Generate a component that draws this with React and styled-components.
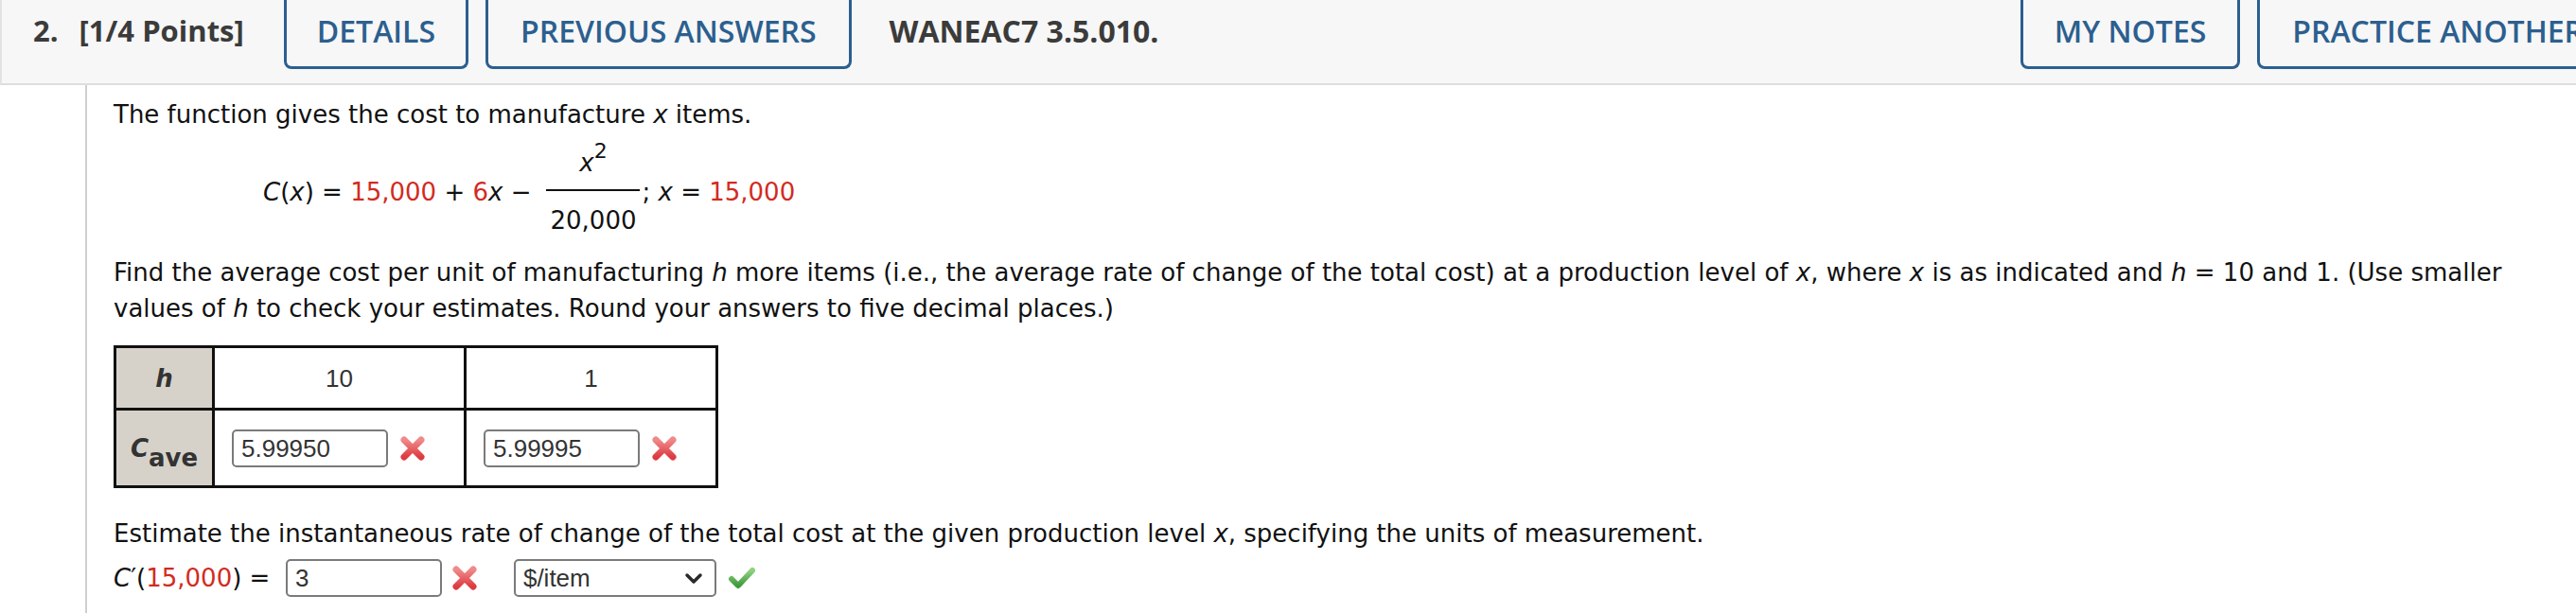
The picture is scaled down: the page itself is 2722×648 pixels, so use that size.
import React from "react";
import styled, { createGlobalStyle } from "styled-components";

const GlobalStyle = createGlobalStyle`
  html, body {
    margin: 0;
    padding: 0;
    background: #fff;
  }
  body {
    width: 2722px;
    height: 648px;
    overflow: hidden;
  }
`;

const Page = styled.div`
  width: 2722px;
  height: 648px;
  overflow: hidden;
  font-family: "DejaVu Sans", Verdana, sans-serif;
  color: #111;
`;

const Header = styled.div`
  display: flex;
  align-items: flex-start;
  height: 88px;
  padding-left: 33px;
  background: #f7f7f7;
  border-left: 2px solid #e2e2e2;
  border-bottom: 2px solid #dedede;
  font-family: "Open Sans", sans-serif;
  font-size: 32px;
  font-weight: 600;
  overflow: hidden;
`;

const HeadText = styled.div`
  height: 64px;
  display: flex;
  align-items: center;
  color: #3b3b3b;
  font-size: ${(p) => p.size || 31}px;
  font-weight: 700;
  margin-left: ${(p) => p.gap || 0}px;
  white-space: nowrap;
`;

const TabButton = styled.div`
  flex-shrink: 0;
  height: 73px;
  box-sizing: border-box;
  display: flex;
  align-items: center;
  padding: 0 ${(p) => p.pad || 32}px;
  padding-bottom: 6px;
  margin-left: ${(p) => p.gap || 0}px;
  border: 3px solid #2c5f8f;
  border-top: none;
  border-radius: 0 0 8px 8px;
  color: #2c5f8f;
  white-space: nowrap;
`;

const RightGroup = styled.div`
  display: flex;
  flex-shrink: 0;
  margin-left: auto;
  margin-right: -45px;
`;

const Body = styled.div`
  margin-left: 90px;
  border-left: 2px solid #cfcfcf;
  padding-left: 28px;
  height: 558px;
  font-size: 26px;
  line-height: 38px;
`;

const Para = styled.p`
  margin: 0;
  padding-top: ${(p) => p.top || 0}px;
`;

const Red = styled.span`
  color: #d22b1f;
`;

const Formula = styled.div`
  display: flex;
  align-items: center;
  margin-left: 158px;
  margin-top: 11px;
  height: 104px;
  white-space: pre;
`;

const Frac = styled.span`
  display: inline-flex;
  flex-direction: column;
  align-items: stretch;
  margin: 0 2px 0 16px;
`;

const Num = styled.span`
  padding: 0 4px 8px;
  border-bottom: 2px solid #111;
  line-height: 40px;
  text-align: center;
`;

const Sup = styled.sup`
  font-size: 22px;
  vertical-align: 14px;
  line-height: 0;
`;

const Den = styled.span`
  padding: 9px 4px 0;
  line-height: 44px;
  text-align: center;
`;

const Table = styled.table`
  border-collapse: collapse;
  margin-top: 20px;
  font-family: "Liberation Sans", Arial, sans-serif;
  font-size: 26px;
  color: #333;
`;

const HeadCell = styled.th`
  width: 101px;
  height: ${(p) => p.h}px;
  padding: 0;
  background: #d6d2ca;
  border: 3px solid #111;
  font-family: "DejaVu Sans", Verdana, sans-serif;
  font-style: italic;
  font-weight: bold;
  color: #333;
`;

const Cell = styled.td`
  width: 263px;
  height: ${(p) => p.h}px;
  padding: 0;
  border: 3px solid #111;
  text-align: center;
`;

const CellInner = styled.div`
  display: flex;
  align-items: center;
  padding-left: 18px;
  gap: 12px;
`;

const Sub = styled.span`
  font-style: normal;
  font-size: 26px;
  position: relative;
  top: 10px;
`;

const AnswerBox = styled.div`
  flex-shrink: 0;
  width: ${(p) => p.w}px;
  height: 40px;
  box-sizing: border-box;
  border: 2px solid #7a7a7a;
  border-radius: 5px;
  background: #fff;
  display: flex;
  align-items: center;
  padding-left: 8px;
  font-family: "Liberation Sans", Arial, sans-serif;
  font-size: 26px;
  color: #333;
  text-align: left;
`;

const AnswerRow = styled.div`
  display: flex;
  align-items: center;
  margin-top: 8px;
  white-space: pre;
`;

const SelectBox = styled(AnswerBox)`
  justify-content: space-between;
  padding-right: 12px;
  margin-left: 38px;
`;

const Mark = styled.svg`
  flex-shrink: 0;
  margin-left: ${(p) => p.gap || 0}px;
`;

const Cross = ({ gap }) => (
  <Mark width="28" height="28" viewBox="0 0 28 28" gap={gap}>
    <defs>
      <linearGradient id="xg" x1="0" y1="0" x2="0" y2="1">
        <stop offset="0" stopColor="#f08a8a" />
        <stop offset="1" stopColor="#dd3b41" />
      </linearGradient>
    </defs>
    <path d="M5 5 L23 23 M23 5 L5 23" stroke="url(#xg)" strokeWidth="7" strokeLinecap="round" />
  </Mark>
);

const Check = ({ gap }) => (
  <Mark width="30" height="28" viewBox="0 0 30 28" gap={gap}>
    <defs>
      <linearGradient id="cg" x1="0" y1="0" x2="0" y2="1">
        <stop offset="0" stopColor="#8fd27f" />
        <stop offset="1" stopColor="#3e9a3e" />
      </linearGradient>
    </defs>
    <path d="M4 15 L11 22 L26 6" fill="none" stroke="url(#cg)" strokeWidth="6" strokeLinecap="round" strokeLinejoin="round" />
  </Mark>
);

const Chevron = () => (
  <svg width="20" height="13" viewBox="0 0 20 13">
    <path d="M3 3 L10 10 L17 3" fill="none" stroke="#2a2a2a" strokeWidth="3.5" strokeLinecap="round" strokeLinejoin="round" />
  </svg>
);

export default function App() {
  return (
    <Page>
      <GlobalStyle />
      <Header>
        <HeadText>2.</HeadText>
        <HeadText gap={22}>[1/4 Points]</HeadText>
        <TabButton gap={42}>DETAILS</TabButton>
        <TabButton gap={18} pad={34}>PREVIOUS ANSWERS</TabButton>
        <HeadText gap={40} size={32}>WANEAC7 3.5.010.</HeadText>
        <RightGroup>
          <TabButton pad={33}>MY NOTES</TabButton>
          <TabButton gap={18} pad={34}>PRACTICE ANOTHER</TabButton>
        </RightGroup>
      </Header>
      <Body>
        <Para top={12}>
          The function gives the cost to manufacture <i>x</i> items.
        </Para>
        <Formula>
          <i>C</i>(<i>x</i>) = <Red>15,000</Red> + <Red>6</Red>
          <i>x</i> −
          <Frac>
            <Num>
              <i>x</i>
              <Sup>2</Sup>
            </Num>
            <Den>20,000</Den>
          </Frac>
          ; <i>x</i> = <Red>15,000</Red>
        </Formula>
        <Para top={14}>
          Find the average cost per unit of manufacturing <i>h</i> more items (i.e., the average rate of change of the
          total cost) at a production level of <i>x</i>, where <i>x</i> is as indicated and <i>h</i> = 10 and 1. (Use
          smaller values of <i>h</i> to check your estimates. Round your answers to five decimal places.)
        </Para>
        <Table>
          <tbody>
            <tr>
              <HeadCell h={63}>h</HeadCell>
              <Cell h={63}>10</Cell>
              <Cell h={63}>1</Cell>
            </tr>
            <tr>
              <HeadCell h={79}>
                C<Sub>ave</Sub>
              </HeadCell>
              <Cell h={79}>
                <CellInner>
                  <AnswerBox w={165}>5.99950</AnswerBox>
                  <Cross />
                </CellInner>
              </Cell>
              <Cell h={79}>
                <CellInner>
                  <AnswerBox w={165}>5.99995</AnswerBox>
                  <Cross />
                </CellInner>
              </Cell>
            </tr>
          </tbody>
        </Table>
        <Para top={29}>
          Estimate the instantaneous rate of change of the total cost at the given production level <i>x</i>, specifying
          the units of measurement.
        </Para>
        <AnswerRow>
          <i>C</i>′(<Red>15,000</Red>) ={"  "}
          <AnswerBox w={165}>3</AnswerBox>
          <Cross gap={10} />
          <SelectBox w={214}>
            $/item
            <Chevron />
          </SelectBox>
          <Check gap={12} />
        </AnswerRow>
      </Body>
    </Page>
  );
}
